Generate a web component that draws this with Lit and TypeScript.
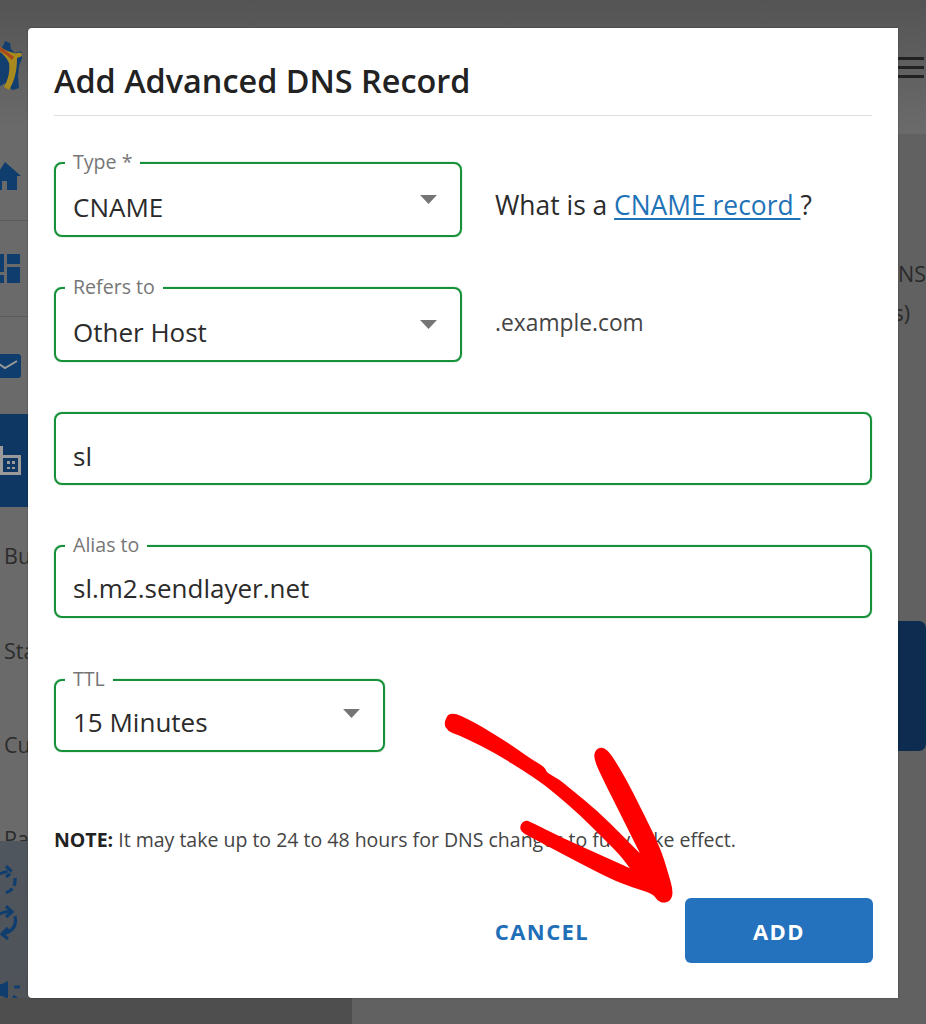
import { LitElement, html, css, svg } from "lit";
import { customElement } from "lit/decorators.js";

const caretShape = svg`<path d="M0 0h15l-7.5 8z"/>`;

/* Outline of the hand-drawn arrow; a repeated point keeps a sharp corner. */
const arrowPoints: [number, number][] = [
  [60, 63], [130, 95], [230, 155], [300, 205], [345, 232], [350, 248], [390, 270], [420, 295], [500, 360], [580, 440],
  [630, 490], [630, 490],
  [575, 380], [520, 270], [490, 205], [497, 178], [520, 170], [545, 195], [590, 270], [630, 350], [690, 470], [715, 550], [730, 605], [722, 632], [700, 640], [680, 630], [670, 612],
  [600, 590], [550, 570], [450, 520], [300, 440], [272, 425], [270, 405], [285, 390], [300, 395], [400, 445], [500, 490],
  [600, 535], [600, 535],
  [570, 495], [520, 445], [450, 375], [380, 315], [330, 275], [230, 210], [150, 165], [80, 133], [55, 125], [40, 100],
];

function smoothClosed(points: [number, number][]): string {
  const mid = (a: [number, number], b: [number, number]) => `${(a[0] + b[0]) / 2} ${(a[1] + b[1]) / 2}`;
  let d = `M${mid(points[points.length - 1], points[0])}`;
  points.forEach((p, i) => {
    const next = points[(i + 1) % points.length];
    d += `Q${p[0]} ${p[1]} ${mid(p, next)}`;
  });
  return d + "Z";
}

@customElement("app-root")
export class AppRoot extends LitElement {
  static styles = css`
    :host { display: block; position: relative; width: 926px; height: 1024px; overflow: hidden; background: #5f5f5f; font-family: "Open Sans", "Liberation Sans", sans-serif; color: #222; }
    * { box-sizing: border-box; }
    .page { height: 1024px; display: flex; flex-direction: column; }
    .topbar { height: 134px; flex: none; display: flex; justify-content: space-between; align-items: flex-start; background: linear-gradient(#545454, #6b6b6b); box-shadow: 0 2px 4px rgba(0,0,0,.45); position: relative; }
    .logo { margin-top: 40px; width: 24px; height: 54px; display: block; }
    .burger { margin: 57px 2px 0 0; width: 26px; display: flex; flex-direction: column; gap: 6.5px; }
    .burger i { display: block; height: 2.5px; background: #222; }
    .under { flex: 1; display: flex; min-height: 0; }
    .side { width: 352px; flex: none; background: #6a6a6a; display: flex; flex-direction: column; position: relative; }
    .nav { display: flex; align-items: center; border-bottom: 1px solid #5c5c5c; }
    .nav svg { display: block; fill: #0f3e6e; overflow: visible; }
    .n1 { height: 87px; }
    .n2 { height: 96px; }
    .n3 { height: 97px; border: 0; }
    .active { height: 93px; background: #0e3763; border: 0; }
    .active svg { fill: #9a9a9a; }
    .sub { height: 94px; padding: 34px 0 0 4px; font-size: 21.5px; line-height: 28px; color: #2c2c2c; }
    .sub.s1 { height: 96px; padding-top: 35px; }
    .panel { position: absolute; left: 0; right: 0; bottom: 0; top: 707px; background: linear-gradient(#50565e, #4f5358); }
    .panel svg { display: block; position: absolute; left: 0; fill: none; stroke: #0f3e6e; stroke-width: 3.2px; }
    .foot { position: absolute; left: 0; right: 0; bottom: 0; height: 26px; background: #4e4e4e; }
    .content { flex: 1; background: #616161; position: relative; font-size: 21.5px; color: #2a2a2a; }
    .t1 { position: absolute; right: 0; top: 126px; line-height: 28px; }
    .t2 { position: absolute; right: 16px; top: 165px; line-height: 28px; }
    .bluecard { position: absolute; right: 0; top: 487px; width: 40px; height: 130px; background: #0d2c50; border-radius: 0 7px 7px 0; }
    .modal { position: absolute; left: 28px; top: 28px; width: 870px; height: 970px; background: #fff; border-radius: 4px 0 0 4px; box-shadow: 0 0 2px rgba(0,0,0,.35); padding: 0 26px; display: flex; flex-direction: column; }
    h1 { margin: 0; height: 88px; padding-top: 31px; font-size: 32.4px; line-height: 42px; font-weight: 600; color: #222; border-bottom: 1px solid #dedede; flex: none; }
    .row { display: flex; align-items: center; }
    .field { position: relative; border: 2px solid #169139; border-radius: 8px; height: 75px; padding: 0 17px; font-size: 26px; color: #2b2b2b; display: flex; align-items: center; flex: none; box-shadow: 0 0 1px #169139; }
    .val { padding-top: 15px; line-height: 34px; }
    .w408 .val { padding-top: 14.5px; }
    .field.plain .val { padding-top: 14px; }
    .field.h73:not(.plain) .val { padding-top: 12px; }
    .label { position: absolute; left: 9px; top: -14px; padding: 0 8px; background: #fff; color: #767676; font-size: 19.6px; line-height: 24px; }
    .caret { position: absolute; right: 23px; top: 31px; width: 17px; height: 9px; fill: #757575; }
    .h73 .caret { top: 28px; }
    .w408 { width: 408px; }
    .w331 { width: 331px; }
    .full { width: 818px; }
    .h73 { height: 73px; }
    .aside { margin-left: 33px; font-size: 26.4px; color: #2b2b2b; line-height: 34px; margin-top: 10px; }
    .aside a { color: #1f73b7; text-decoration: underline; text-underline-offset: 3px; }
    .aside.small { font-size: 22.8px; color: #444; margin-top: -4px; }
    .r1 { margin-top: 46px; }
    .r2 { margin-top: 50px; }
    .r3 { margin-top: 50px; }
    .r4 { margin-top: 60px; }
    .r5 { margin-top: 61px; }
    .note { margin: 75px 0 0; font-size: 19.5px; line-height: 26px; color: #444; }
    .note b { color: #222; font-weight: 700; }
    .actions { margin: 45px -1px 0 0; display: flex; justify-content: flex-end; align-items: center; }
    button { font: 700 22px "Open Sans", "Liberation Sans", sans-serif; letter-spacing: 1.4px; border: 0; height: 65px; border-radius: 6px; cursor: pointer; }
    .cancel { background: #fff; color: #1f6fb8; width: 188px; margin-right: 49px; }
    .add { background: #2472bd; color: #fff; width: 188px; }
    .arrow { position: absolute; left: 430px; top: 690px; width: 300px; height: 230px; fill: #f00; }
  `;

  private caret() {
    return html`<svg class="caret" viewBox="0 0 15 8">${caretShape}</svg>`;
  }

  render() {
    return html`
      <div class="page">
        <header class="topbar">
          <svg class="logo" viewBox="0 0 24 54">
            <path d="M0 10 3 6 5 1l5 2 1 6 4 4 6-2 1 7-3 8-1 10 1 12-6 2-5-3-3-4-5 3z" fill="#123f6f"/>
            <path d="M0 7c5 3 9 5 14 6 3 1 5-1 7 0l1 3-5 2c0 12-2 22-8 32l-5-3c5-9 6-17 5-24C7 18 3 14 0 12z" fill="#a98a1f"/>
            <path d="M0 7c5 3 9 6 14 10l-2 3C8 16 4 13 0 11z" fill="#a9481c"/>
          </svg>
          <div class="burger"><i></i><i></i><i></i></div>
        </header>
        <div class="under">
          <nav class="side">
            <div class="nav n1"><svg width="22" height="28" viewBox="0 0 22 28" style="margin-top:-2px"><path d="M-4 14 5 0 21 14h-4v14H7V19H2v9H-3V14z"/></svg></div>
            <div class="nav n2"><svg width="21" height="29" viewBox="0 0 21 29"><path d="M-3 0H4v18H-3zM7 0h13v10H7zM7 13h13v16H7zM-3 21H4v8H-3z"/></svg></div>
            <div class="nav n3"><svg width="22" height="26" viewBox="0 0 22 26"><path d="M0 1h18q3 0 3 3v18q0 3-3 3H0z"/><path d="M-1 11l6 4 12-7" fill="none" stroke="#9a9a9a" stroke-width="2"/></svg></div>
            <div class="nav active"><svg width="22" height="30" viewBox="0 0 22 30"><path d="M0 0h3v9h18v20H0zM3 12v14h15V12zM7 15h3v3H7zM12 15h3v3h-3zM7 21h3v2H7zM12 21h3v2h-3z" fill-rule="evenodd"/></svg></div>
            <div class="sub s1">Bu</div>
            <div class="sub">Sta</div>
            <div class="sub">Cu</div>
            <div class="sub">Pa</div>
            <div class="panel">
              <svg style="top:24px" width="24" height="34" viewBox="0 0 24 34"><path d="M0 9q5-3 9-2M6 1l6 6-6 5M15 13q1 12-10 15" stroke-dasharray="8 3"/></svg>
              <svg style="top:64px" width="24" height="38" viewBox="0 0 24 38"><path d="M0 9q5-3 9-2M6 1l6 6-6 5M15 11q3 14-12 18M8 23l-6 6 6 5"/></svg>
              <svg style="top:140px" width="24" height="22" viewBox="0 0 24 22"><path d="M0 3h2l6-3v18L2 15H0z" fill="#0f3e6e" stroke="none"/><path d="M14 6h6M13 15l4 3" stroke="#123f6f"/></svg>
            </div>
            <div class="foot"></div>
          </nav>
          <main class="content">
            <span class="t1">NS</span>
            <span class="t2">s)</span>
            <div class="bluecard"></div>
          </main>
        </div>
      </div>

      <section class="modal">
        <h1>Add Advanced DNS Record</h1>
        <div class="row r1">
          <div class="field w408"><span class="label">Type *</span><span class="val">CNAME</span>${this.caret()}</div>
          <div class="aside">What is a <a href="#">CNAME record </a>?</div>
        </div>
        <div class="row r2">
          <div class="field w408"><span class="label">Refers to</span><span class="val">Other Host</span>${this.caret()}</div>
          <div class="aside small">.example.com</div>
        </div>
        <div class="field full h73 plain r3"><span class="val">sl</span></div>
        <div class="field full h73 r4"><span class="label">Alias to</span><span class="val">sl.m2.sendlayer.net</span></div>
        <div class="field w331 h73 r5"><span class="label">TTL</span><span class="val">15 Minutes</span>${this.caret()}</div>
        <p class="note"><b>NOTE:</b> It may take up to 24 to 48 hours for DNS changes to fully take effect.</p>
        <div class="actions">
          <button class="cancel">CANCEL</button>
          <button class="add">ADD</button>
        </div>
      </section>

      <svg class="arrow" viewBox="0 0 900 690">
        <path d=${smoothClosed(arrowPoints)}/>
      </svg>
    `;
  }
}
